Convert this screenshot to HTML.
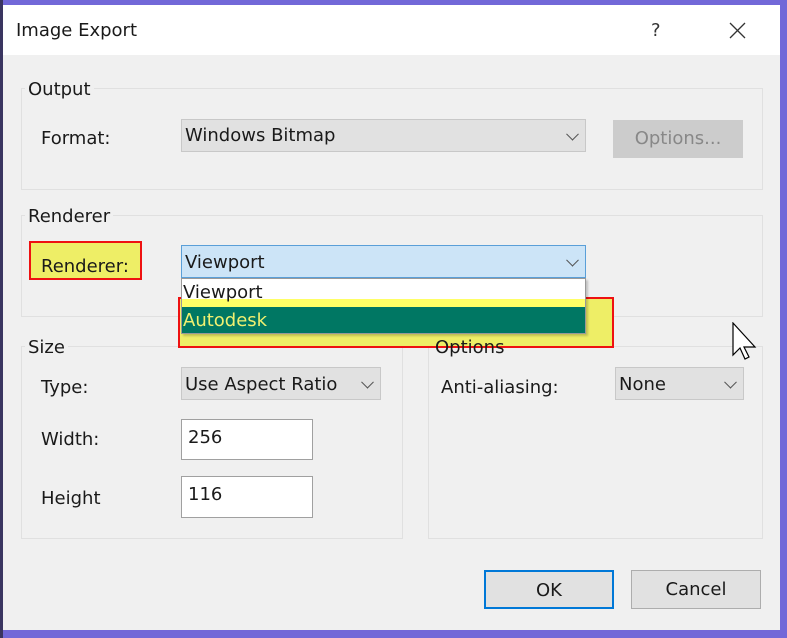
<!DOCTYPE html><html><head><style>
body{margin:0;width:787px;height:638px;background:#7268d8;position:relative;overflow:hidden;font-family:"DejaVu Sans","Liberation Sans",sans-serif;font-size:18px;color:#1a1a1a}
.a{position:absolute}
.win{left:3px;top:5px;width:777px;height:625px;background:#f0f0f0}
.title{left:3px;top:5px;width:777px;height:50px;background:#fff}
.grp{border:1px solid #e0e0e0}
.cb{background:#e1e1e1;border:1px solid #c8c8c8;box-sizing:border-box;padding-left:3px}
.chev{position:absolute;right:8px;top:50%;width:8px;height:8px;border-right:1.3px solid #555;border-bottom:1.3px solid #555;transform:translateY(-70%) rotate(45deg)}
.tb{background:#fff;border:1px solid #a0a0a0;box-sizing:border-box;padding:7px 0 0 6px}
.btn{background:#e1e1e1;border:1px solid #adadad;box-sizing:border-box;text-align:center}
</style></head><body>
<div class="a" style="left:0;top:0;width:3px;height:638px;background:#3a3560"></div>
<div class="a win"></div>
<div class="a title"></div>
<div class="a" style="left:16px;top:20px;font-size:18px">Image Export</div>
<div class="a" style="left:651px;top:20px;font-size:18px;color:#333">?</div>
<svg class="a" style="left:729px;top:22px" width="17" height="17"><path d="M1 1L16 16M16 1L1 16" stroke="#333" stroke-width="1.3"/></svg>

<div class="a grp" style="left:21px;top:88px;width:740px;height:100px"></div>
<div class="a" style="left:25px;top:79px;background:#f0f0f0;padding:0 3px">Output</div>
<div class="a" style="left:41px;top:128px">Format:</div>
<div class="a cb" style="left:181px;top:119px;width:405px;height:33px;line-height:31px">Windows Bitmap<span class="chev"></span></div>
<div class="a btn" style="left:613px;top:120px;width:130px;height:38px;line-height:36px;background:#cccccc;border-color:#cccccc;color:#888">Options...</div>

<div class="a grp" style="left:21px;top:215px;width:740px;height:100px"></div>
<div class="a" style="left:25px;top:206px;background:#f0f0f0;padding:0 3px">Renderer</div>
<div class="a" style="left:29px;top:241px;width:113px;height:39px;background:#eeee66;border:2px solid #ee1111;box-sizing:border-box"></div>
<div class="a" style="left:41px;top:256px">Renderer:</div>
<div class="a cb" style="left:181px;top:245px;width:405px;height:33px;line-height:33px;background:#cce4f7;border-color:#5a9fd8">Viewport<span class="chev"></span></div>

<div class="a grp" style="left:21px;top:346px;width:380px;height:191px"></div>
<div class="a" style="left:25px;top:337px;background:#f0f0f0;padding:0 3px">Size</div>
<div class="a grp" style="left:428px;top:346px;width:333px;height:191px"></div>

<div class="a" style="left:178px;top:297px;width:436px;height:51px;background:#eeee66;border:2px solid #ee1111;box-sizing:border-box"></div>
<div class="a" style="left:432px;top:337px;padding:0 3px">Options</div>
<div class="a" style="left:181px;top:278px;width:405px;height:56px;background:#fff;border:1px solid #999;box-sizing:border-box;box-shadow:2px 2px 2px rgba(0,0,0,.2)"></div>
<div class="a" style="left:182px;top:299px;width:403px;height:8px;background:#ffff66"></div>
<div class="a" style="left:182px;top:307px;width:403px;height:26px;background:#007763"></div>
<div class="a" style="left:183px;top:282px">Viewport</div>
<div class="a" style="left:183px;top:310px;color:#f0f070">Autodesk</div>

<svg class="a" style="left:732px;top:322px" width="26" height="38"><path d="M1 1L1 33L8 26L13 37L17 35L12 25L23 25Z" fill="#fff" stroke="#000" stroke-width="1.2"/></svg>

<div class="a" style="left:41px;top:377px">Type:</div>
<div class="a cb" style="left:181px;top:367px;width:200px;height:33px;line-height:33px">Use Aspect Ratio<span class="chev"></span></div>
<div class="a" style="left:41px;top:429px">Width:</div>
<div class="a tb" style="left:181px;top:419px;width:132px;height:41px">256</div>
<div class="a" style="left:41px;top:488px">Height</div>
<div class="a tb" style="left:181px;top:476px;width:132px;height:42px">116</div>

<div class="a" style="left:441px;top:377px">Anti-aliasing:</div>
<div class="a cb" style="left:615px;top:367px;width:129px;height:33px;line-height:33px">None<span class="chev"></span></div>

<div class="a btn" style="left:484px;top:570px;width:130px;height:39px;line-height:37px;border:2px solid #0078d7">OK</div>
<div class="a btn" style="left:631px;top:570px;width:130px;height:39px;line-height:37px">Cancel</div>
</body></html>
